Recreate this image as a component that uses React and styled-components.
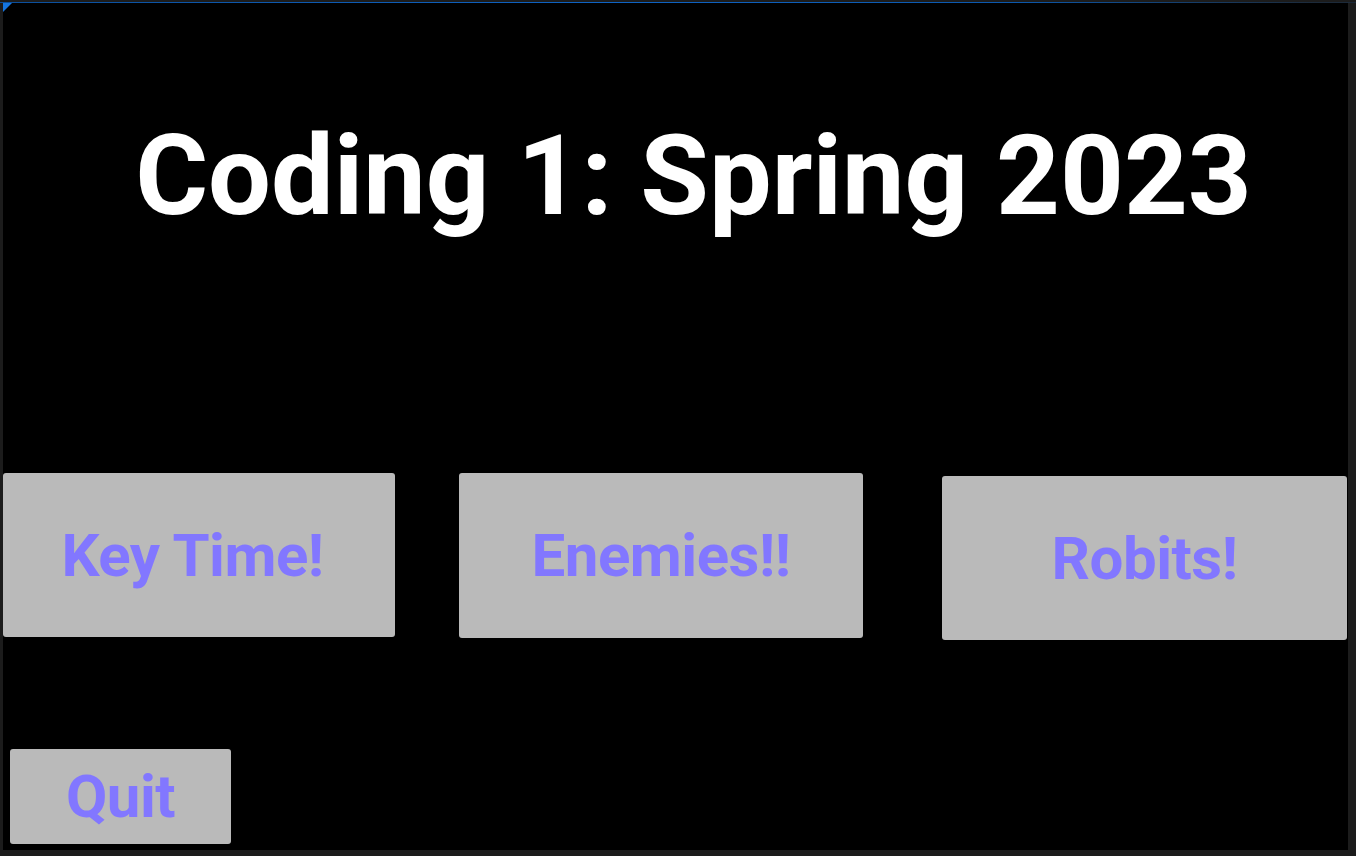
import React from "react";
import styled, { createGlobalStyle } from "styled-components";

const Global = createGlobalStyle`
  html, body {
    margin: 0;
    padding: 0;
    background: #1c1c1c;
    font-family: Roboto, "Liberation Sans", sans-serif;
  }
`;

const Frame = styled.div`
  width: 1356px;
  height: 856px;
  box-sizing: border-box;
  padding: 3px 8px 6px 3px;
  background: #1c1c1c;
  position: relative;
  overflow: hidden;
`;

const TopLine = styled.div`
  position: absolute;
  left: 0;
  right: 0;
  top: 2px;
  height: 1px;
  background: linear-gradient(90deg, #0b4f9c 0%, #0e63c4 45%, #0b58ad 75%, #1c2a3a 97%);
`;

const Corner = styled.div`
  position: absolute;
  left: 3px;
  top: 3px;
  width: 0;
  height: 0;
  border-top: 9px solid #1575e0;
  border-right: 9px solid transparent;
`;

const Screen = styled.div`
  width: 100%;
  height: 100%;
  background: #000;
  display: flex;
  flex-direction: column;
`;

const Title = styled.h1`
  margin: 0;
  padding: 108px 0 0 36px;
  height: 250px;
  box-sizing: border-box;
  text-align: center;
  color: #fff;
  font-size: 111.5px;
  font-weight: 700;
  line-height: 131px;
  letter-spacing: 0;
`;

const Row = styled.div`
  display: flex;
  align-items: flex-start;
  margin-top: 220px;
`;

const Button = styled.button`
  width: ${({ w }) => w}px;
  height: ${({ h }) => h}px;
  margin-left: ${({ ml }) => ml || 0}px;
  margin-top: ${({ mt }) => mt || 0}px;
  padding: 0 ${({ shift }) => shift || 0}px 0 0;
  box-sizing: border-box;
  flex: none;
  border: none;
  border-radius: 3px;
  background: #bababa;
  color: #8277ff;
  font-family: Roboto, "Liberation Sans", sans-serif;
  font-size: 60px;
  font-weight: 700;
  letter-spacing: -0.5px;
  display: flex;
  align-items: center;
  justify-content: center;
  cursor: pointer;
`;

const Bottom = styled.div`
  display: flex;
  margin-top: 109px;
`;

export default function App() {
  return (
    <>
      <Global />
      <Frame>
        <TopLine />
        <Corner />
        <Screen>
          <Title>Coding 1: Spring 2023</Title>
          <Row>
            <Button w={392} h={164} shift={13}>Key Time!</Button>
            <Button w={404} h={165} ml={64}>Enemies!!</Button>
            <Button w={405} h={164} ml={79} mt={3}>Robits!</Button>
          </Row>
          <Bottom>
            <Button w={221} h={95} ml={7}>Quit</Button>
          </Bottom>
        </Screen>
      </Frame>
    </>
  );
}
